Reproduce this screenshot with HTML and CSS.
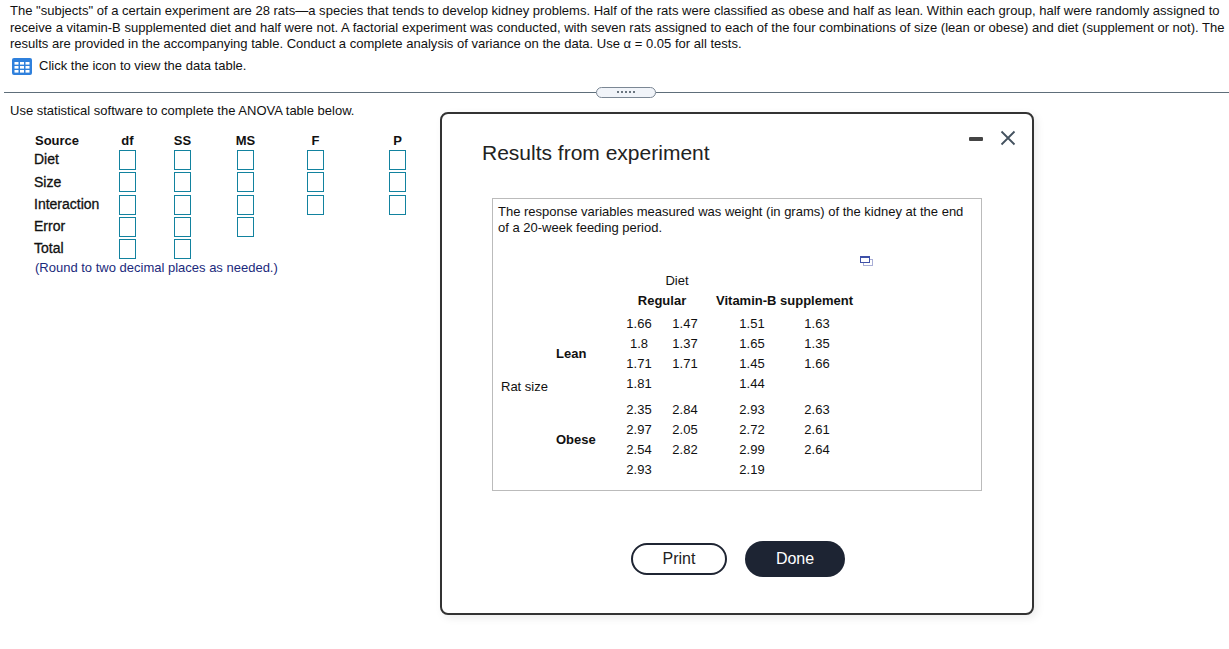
FILE: index.html
```html
<!DOCTYPE html>
<html lang="en">
<head>
    <meta charset="UTF-8">
    <meta name="viewport" content="width=device-width, initial-scale=1.0">
    <title>Results from experiment</title>
    <link rel="stylesheet" href="styles.css">
</head>
<body>
    <div class="question">
        <p class="intro">The "subjects" of a certain experiment are 28 rats—a species that tends to develop kidney problems. Half of the rats were classified as obese and half as lean. Within each group, half were randomly assigned to receive a vitamin-B supplemented diet and half were not. A factorial experiment was conducted, with seven rats assigned to each of the four combinations of size (lean or obese) and diet (supplement or not). The results are provided in the accompanying table. Conduct a complete analysis of variance on the data. Use α = 0.05 for all tests.</p>
        <div class="data-link">
            <svg class="grid-icon" width="20" height="17" viewBox="0 0 20 17">
                <rect x="0" y="0" width="20" height="17" rx="2" fill="#2f80dc"/>
                <g fill="#fff">
                    <rect x="2.5" y="4" width="4" height="2.6"/><rect x="8" y="4" width="4" height="2.6"/><rect x="13.5" y="4" width="4" height="2.6"/>
                    <rect x="2.5" y="8" width="4" height="2.6"/><rect x="8" y="8" width="4" height="2.6"/><rect x="13.5" y="8" width="4" height="2.6"/>
                    <rect x="2.5" y="12" width="4" height="2.6"/><rect x="8" y="12" width="4" height="2.6"/><rect x="13.5" y="12" width="4" height="2.6"/>
                </g>
            </svg>
            <span>Click the icon to view the data table.</span>
        </div>
    </div>

    <div class="divider">
        <div class="divider-line short"></div>
        <div class="handle"><i></i><i></i><i></i><i></i><i></i></div>
        <div class="divider-line"></div>
    </div>

    <div class="answer">
        <p class="prompt">Use statistical software to complete the ANOVA table below.</p>
        <div class="anova">
            <div class="src-head">Source</div>
            <div class="col-head">df</div><div class="col-head">SS</div><div class="col-head">MS</div><div class="col-head">F</div><div class="col-head">P</div>

            <div class="src">Diet</div>
            <div class="box"></div><div class="box"></div><div class="box"></div><div class="box"></div><div class="box"></div>

            <div class="src">Size</div>
            <div class="box"></div><div class="box"></div><div class="box"></div><div class="box"></div><div class="box"></div>

            <div class="src">Interaction</div>
            <div class="box"></div><div class="box"></div><div class="box"></div><div class="box"></div><div class="box"></div>

            <div class="src">Error</div>
            <div class="box"></div><div class="box"></div><div class="box"></div><div></div><div></div>

            <div class="src">Total</div>
            <div class="box"></div><div class="box"></div><div></div><div></div><div></div>
        </div>
        <p class="note">(Round to two decimal places as needed.)</p>
    </div>

    <div class="modal">
        <div class="modal-head">
            <h2 class="modal-title">Results from experiment</h2>
            <div class="modal-controls">
                <div class="minimize"></div>
                <svg width="16" height="16" viewBox="0 0 16 16">
                    <path d="M1.5 1.5 L14.5 14.5 M14.5 1.5 L1.5 14.5" stroke="#44525f" stroke-width="1.8" fill="none"/>
                </svg>
            </div>
        </div>

        <div class="data-box">
            <p class="data-text">The response variables measured was weight (in grams) of the kidney at the end of a 20-week feeding period.</p>
            <svg class="copy-icon" width="13" height="10" viewBox="0 0 13 10">
                <rect x="3.5" y="3.5" width="9" height="6" fill="none" stroke="#a9aed6"/>
                <rect x="0.5" y="0.5" width="9" height="6" fill="#fff" stroke="#3f51a8"/>
                <rect x="0.5" y="0.5" width="9" height="1.5" fill="#3f51a8"/>
            </svg>
            <table class="data-table">
                <colgroup>
                    <col class="c-rat"><col class="c-size"><col class="c-num"><col class="c-num"><col class="c-gap"><col class="c-vit"><col class="c-sup">
                </colgroup>
                <tr class="row-diet">
                    <td></td><td></td><td colspan="2" class="diet">Diet</td><td></td><td></td><td></td>
                </tr>
                <tr class="row-head">
                    <td rowspan="10" class="rat">Rat size</td>
                    <td></td><th colspan="2">Regular</th><td></td><th colspan="2" class="vit-head">Vitamin-B supplement</th>
                </tr>
                <tr><th rowspan="4" class="size">Lean</th><td>1.66</td><td>1.47</td><td></td><td>1.51</td><td class="sup">1.63</td></tr>
                <tr><td>1.8</td><td>1.37</td><td></td><td>1.65</td><td class="sup">1.35</td></tr>
                <tr><td>1.71</td><td>1.71</td><td></td><td>1.45</td><td class="sup">1.66</td></tr>
                <tr><td>1.81</td><td></td><td></td><td>1.44</td><td class="sup"></td></tr>
                <tr class="row-gap"><td colspan="6"></td></tr>
                <tr><th rowspan="4" class="size">Obese</th><td>2.35</td><td>2.84</td><td></td><td>2.93</td><td class="sup">2.63</td></tr>
                <tr><td>2.97</td><td>2.05</td><td></td><td>2.72</td><td class="sup">2.61</td></tr>
                <tr><td>2.54</td><td>2.82</td><td></td><td>2.99</td><td class="sup">2.64</td></tr>
                <tr><td>2.93</td><td></td><td></td><td>2.19</td><td class="sup"></td></tr>
            </table>
        </div>

        <div class="modal-buttons">
            <button class="btn-print" type="button">Print</button>
            <button class="btn-done" type="button">Done</button>
        </div>
    </div>
</body>
</html>
```

FILE: styles.css
```css
body{
    margin:0;
    background:#fff;
    color:#111;
    font-family:"Liberation Sans", Arial, sans-serif;
    font-size:13px;
    line-height:16.5px;
}
p{
    margin:0;
}
.question{
    padding:3px 2px 0 10px;
}
.intro{
    font-size:13.04px;
}
.data-link{
    display:flex;
    align-items:center;
    gap:7px;
    margin-top:5px;
    padding-left:2px;
    height:17px;
}
.divider{
    display:flex;
    align-items:center;
    margin-top:12px;
    padding-left:4px;
}
.divider-line{
    flex:1;
    height:1px;
    background:#5e6e7a;
}
.divider-line.short{
    flex:0 0 592px;
}
.handle{
    display:flex;
    justify-content:center;
    align-items:center;
    gap:2px;
    width:60px;
    height:11px;
    box-sizing:border-box;
    border:1px solid #7b8794;
    border-radius:6px;
    background:#f1f4f9;
}
.handle i{
    width:2px;
    height:2px;
    background:#6b7680;
}
.answer{
    padding:5px 0 0 10px;
}
.anova{
    display:grid;
    grid-template-columns:85px 55px 63px 70px 82px 17px;
    grid-template-rows:18px repeat(5, 22.25px);
    margin:13px 0 0 24px;
    font-weight:bold;
}
.src-head, .src{
    display:flex;
    align-items:center;
}
.src-head{
    padding-left:1px;
}
.src{
    font-weight:normal;
    font-size:14px;
    padding-bottom:3px;
    -webkit-text-stroke:0.3px #111;
}
.col-head{
    display:flex;
    justify-content:center;
    align-items:center;
    width:17px;
}
.box{
    width:17px;
    height:20px;
    box-sizing:border-box;
    border:1.5px solid #12829f;
}
.note{
    margin:-1px 0 0 25px;
    color:#1b2a7c;
}
.modal{
    position:absolute;
    left:440px;
    top:112px;
    width:594px;
    height:503px;
    box-sizing:border-box;
    border:2px solid #333;
    border-radius:8px;
    background:#fff;
    box-shadow:3px 3px 8px rgba(0,0,0,0.08);
}
.modal-head{
    display:flex;
    justify-content:space-between;
    padding:16px 16px 0 40px;
}
.modal-title{
    margin:0;
    font-size:21px;
    line-height:46px;
    font-weight:normal;
    color:#222;
}
.modal-controls{
    display:flex;
    gap:17px;
    align-items:flex-start;
}
.minimize{
    width:14px;
    height:4px;
    margin-top:7px;
    border-radius:1px;
    background:#444;
}
.data-box{
    margin:22px 0 0 50px;
    width:490px;
    height:293px;
    box-sizing:border-box;
    border:1px solid #bbb;
    padding:5px;
}
.data-text{
    line-height:16px;
    padding-right:8px;
}
.copy-icon{
    display:block;
    margin:20px 0 0 362px;
}
.data-table{
    border-collapse:collapse;
    table-layout:fixed;
    width:358px;
    margin-top:5px;
}
.c-rat{ width:58px; }
.c-size{ width:60px; }
.c-num{ width:46px; }
.c-gap{ width:8px; }
.c-vit{ width:72px; }
.c-sup{ width:68px; }
.data-table td, .data-table th{
    padding:0;
    height:20px;
    text-align:center;
}
.data-table th{
    font-weight:bold;
}
.row-diet td{
    height:20px;
}
.data-table .diet{
    padding-left:30px;
}
.data-table .row-head th{
    height:23px;
    vertical-align:top;
    padding-top:2px;
    box-sizing:border-box;
}
.data-table .row-head .vit-head{
    padding-right:3px;
}
.data-table .rat{
    text-align:left;
    padding:4px 0 0 3px;
}
.data-table .size{
    text-align:left;
}
.data-table .sup{
    padding-right:10px;
}
.data-table .row-gap td{
    height:6px;
    line-height:0;
}
.modal-buttons{
    display:flex;
    justify-content:center;
    align-items:center;
    gap:18px;
    margin:50px 0 0 2px;
}
.modal-buttons button{
    font-family:"Liberation Sans", Arial, sans-serif;
    font-size:16px;
    border-radius:18px;
    box-sizing:border-box;
}
.btn-print{
    width:96px;
    height:32px;
    border:2px solid #1f2533;
    background:#fff;
    color:#222;
}
.btn-done{
    width:100px;
    height:36px;
    border:none;
    background:#1d2433;
    color:#fff;
}
```
